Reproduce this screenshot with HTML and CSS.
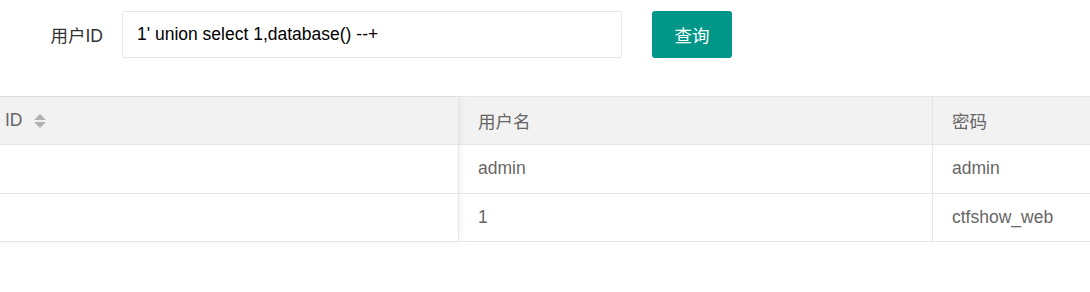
FILE: index.html
```html
<!DOCTYPE html>
<html lang="zh-CN">
<head>
    <meta charset="UTF-8">
    <title>用户查询</title>
    <link rel="stylesheet" href="styles.css">
</head>
<body>
    <!-- 查询表单 -->
    <form class="search-form" onsubmit="return false;">
        <label class="form-label" for="uid">用户ID</label>
        <input class="form-input" type="text" id="uid" value="1' union select 1,database() --+">
        <button class="btn" type="submit">查询</button>
    </form>

    <!-- 结果表格 -->
    <div class="table-wrap">
        <div class="table-box">
            <div class="fixed-left">
                <div class="cell head">ID <span class="sort"><i class="up"></i><i class="down"></i></span></div>
                <div class="cell"></div>
                <div class="cell"></div>
            </div>
            <div class="main">
                <div class="row head"><div class="cell col-name">用户名</div><div class="cell">密码</div></div>
                <div class="row"><div class="cell col-name">admin</div><div class="cell">admin</div></div>
                <div class="row"><div class="cell col-name">1</div><div class="cell">ctfshow_web</div></div>
            </div>
        </div>
    </div>
</body>
</html>
```

FILE: styles.css
```css
body {
    margin: 0;
    font-family: "Liberation Sans", "Noto Sans CJK SC", sans-serif;
    font-size: 17.5px;
    color: #333;
    background: #fff;
    overflow: hidden;
}
.search-form {
    display: flex;
    align-items: center;
    padding-top: 11px;
    height: 47px;
}
.form-label {
    width: 103px;
    text-align: right;
    margin-right: 19px;
    color: #333;
}
.form-input {
    box-sizing: border-box;
    width: 500px;
    height: 47px;
    padding: 0 14px;
    border: 1px solid #e6e6e6;
    border-radius: 2px;
    font-family: inherit;
    font-size: 17.5px;
    color: #000;
    outline: none;
}
.btn {
    width: 80px;
    height: 47px;
    margin-left: 30px;
    border: none;
    border-radius: 3px;
    background: #009688;
    color: #fff;
    font-family: inherit;
    font-size: 17.5px;
    cursor: pointer;
}
.table-wrap {
    margin-top: 38px;
    overflow: hidden;
    padding-bottom: 10px;
}
.table-box {
    display: flex;
    margin-left: -14px;
    border-top: 1px solid #e6e6e6;
    color: #666;
}
.fixed-left {
    position: relative;
    z-index: 1;
    width: 472px;
    flex: none;
    border-right: 1px solid #e6e6e6;
    box-shadow: 0 -1px 8px rgba(0, 0, 0, 0.08);
    background: #fff;
}
.cell {
    box-sizing: border-box;
    height: 48.3px;
    padding: 0 19px;
    display: flex;
    align-items: center;
    border-bottom: 1px solid #e6e6e6;
}
.head .cell,
.cell.head {
    background: #f2f2f2;
}
.sort {
    display: inline-flex;
    flex-direction: column;
    margin-left: 11px;
    gap: 2px;
}
.sort i {
    width: 0;
    height: 0;
    border-left: 6px solid transparent;
    border-right: 6px solid transparent;
}
.sort .up {
    border-bottom: 6px solid #b2b2b2;
}
.sort .down {
    border-top: 6px solid #b2b2b2;
}
.main {
    flex: none;
    width: 700px;
}
.row {
    display: flex;
}
.row .cell {
    border-right: 1px solid #e6e6e6;
    flex: 1;
}
.row .col-name {
    flex: none;
    width: 474px;
}
```
